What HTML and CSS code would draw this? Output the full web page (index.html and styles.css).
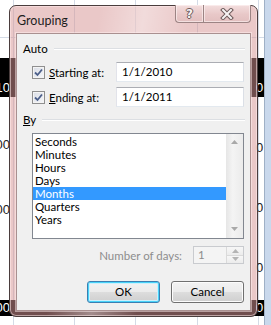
FILE: index.html
```html
<!DOCTYPE html>
<html>
<head>
<meta charset="utf-8">
<title>Grouping</title>
<link rel="stylesheet" href="styles.css">
</head>
<body>
<div class="sheet">
  <div class="cell left light" style="top:79px">10</div>
  <div class="cell left" style="top:136px">00</div>
  <div class="cell left" style="top:201px">00</div>
  <div class="cell left light" style="top:299px">00</div>
  <div class="cell right light" style="top:79px">0</div>
  <div class="cell right" style="top:139px">0</div>
  <div class="cell right" style="top:199px">0</div>
  <div class="cell right" style="top:259px">0</div>
  <div class="cell right light" style="top:299px">0</div>

  <div class="dialog">
    <div class="titlebar">
      <span class="title">Grouping</span>
      <div class="caption-btns">
        <div class="cap help">?</div>
        <div class="cap close">
          <svg width="16" height="12" viewBox="0 0 16 12">
            <path d="M4 2 L12 10 M12 2 L4 10" stroke="#6d5a5a" stroke-width="4" stroke-linecap="square" fill="none"/>
            <path d="M4 2 L12 10 M12 2 L4 10" stroke="#f6f2f2" stroke-width="2" stroke-linecap="square" fill="none"/>
          </svg>
        </div>
      </div>
    </div>
    <div class="client">
      <div class="group-head"><span>Auto</span><i class="rule"></i></div>
      <div class="auto-rows">
        <div class="row">
          <div class="chk">
            <span class="box"><svg width="9" height="9" viewBox="0 0 9 9"><path d="M1 4.5 L3.5 7 L8 1.5" stroke="#4c5f8a" stroke-width="1.8" fill="none"/></svg></span>
            <span class="lbl"><u>S</u>tarting at:</span>
          </div>
          <div class="textbox">1/1/2010</div>
        </div>
        <div class="row">
          <div class="chk">
            <span class="box"><svg width="9" height="9" viewBox="0 0 9 9"><path d="M1 4.5 L3.5 7 L8 1.5" stroke="#4c5f8a" stroke-width="1.8" fill="none"/></svg></span>
            <span class="lbl"><u>E</u>nding at:</span>
          </div>
          <div class="textbox">1/1/2011</div>
        </div>
      </div>
      <div class="group-head by"><span><u>B</u>y</span><i class="rule"></i></div>
      <div class="listbox">
        <ul class="items">
          <li>Seconds</li>
          <li>Minutes</li>
          <li>Hours</li>
          <li>Days</li>
          <li class="sel">Months</li>
          <li>Quarters</li>
          <li>Years</li>
        </ul>
        <div class="scrollbar">
          <svg width="7" height="4" viewBox="0 0 7 4"><path d="M0 4 L3.5 0 L7 4Z" fill="#a9a9a9"/></svg>
          <svg width="7" height="4" viewBox="0 0 7 4"><path d="M0 0 L3.5 4 L7 0Z" fill="#a9a9a9"/></svg>
        </div>
      </div>
      <div class="days-row">
        <span class="days-lbl">Number of days:</span>
        <div class="spin">
          <span class="spin-val">1</span>
          <div class="spin-btns">
            <span class="sb"><svg width="7" height="4" viewBox="0 0 7 4"><path d="M0 4 L3.5 0 L7 4Z" fill="#b4b4b4"/></svg></span>
            <span class="sb"><svg width="7" height="4" viewBox="0 0 7 4"><path d="M0 0 L3.5 4 L7 0Z" fill="#b4b4b4"/></svg></span>
          </div>
        </div>
      </div>
      <div class="buttons">
        <div class="btn default">OK</div>
        <div class="btn">Cancel</div>
      </div>
    </div>
  </div>
</div>
</body>
</html>
```
FILE: styles.css
```css
html, body {
  margin: 0;
  padding: 0;
  background: #fff;
}

.sheet {
  position: relative;
  width: 271px;
  height: 325px;
  overflow: hidden;
  font-family: Lato, "Open Sans", sans-serif;
  background:
    linear-gradient(#c9d8ec, #c9d8ec) 265px 0 / 6px 100% no-repeat,
    linear-gradient(#9fb0c6, #9fb0c6) 264px 0 / 1px 100% no-repeat,
    linear-gradient(#000, #000) 0 58px / 264px 39px no-repeat,
    linear-gradient(#000, #000) 0 300px / 264px 16px no-repeat,
    linear-gradient(#d4dbe6, #d4dbe6) 0 37px / 264px 1px no-repeat,
    linear-gradient(#d4dbe6, #d4dbe6) 13px 0 / 1px 100% no-repeat,
    linear-gradient(#d4dbe6, #d4dbe6) 74px 0 / 1px 100% no-repeat,
    linear-gradient(#d4dbe6, #d4dbe6) 135px 0 / 1px 100% no-repeat,
    linear-gradient(#d4dbe6, #d4dbe6) 197px 0 / 1px 100% no-repeat,
    linear-gradient(#d4dbe6, #d4dbe6) 258px 0 / 1px 100% no-repeat,
    #fff;
}

.cell {
  position: absolute;
  font-family: "Liberation Sans", sans-serif;
  font-size: 13px;
  line-height: 18px;
  color: #222;
}
.cell.left { right: 261px; }
.cell.right { left: 256px; }
.cell.light { color: #fff; }

.dialog {
  position: absolute;
  left: 9px;
  top: 5px;
  width: 249px;
  height: 312px;
  box-sizing: border-box;
  border: 1px solid #4a3d3d;
  border-radius: 7px;
  padding: 0 6px 5px 6px;
  display: flex;
  flex-direction: column;
  background:
    linear-gradient(100deg, rgba(255,255,255,0) 30%, rgba(255,255,255,0.35) 45%, rgba(255,255,255,0) 60%),
    rgba(214, 150, 150, 0.52);
  box-shadow: inset 0 0 0 1px rgba(255, 235, 235, 0.55);
}

.titlebar {
  height: 27px;
  display: flex;
  justify-content: space-between;
  align-items: flex-start;
  flex: none;
}

.title {
  font-size: 12.5px;
  color: #1e1e1e;
  line-height: 14px;
  margin-top: 8px;
  margin-left: 1px;
}

.caption-btns {
  display: flex;
  margin-top: -1px;
}

.cap {
  height: 18px;
  box-sizing: border-box;
  border: 1px solid #9c8484;
  border-top: none;
  display: flex;
  align-items: center;
  justify-content: center;
  background: linear-gradient(#f3dede, #e8c8c8 55%, #e2bfbf);
  box-shadow: inset 0 0 0 1px rgba(255, 245, 245, 0.6);
}
.cap.help {
  width: 28px;
  border-radius: 0 0 0 4px;
  border-right: none;
  font-family: "DejaVu Sans", sans-serif;
  font-weight: bold;
  font-size: 12px;
  color: #f7f3f3;
  text-shadow: 1px 0 #6d5a5a, -1px 0 #6d5a5a, 0 1px #6d5a5a, 0 -1px #6d5a5a;
}
.cap.close {
  width: 48px;
  border-radius: 0 0 4px 0;
}

.client {
  flex: 1;
  border: 1px solid #a99090;
  background: #f0f0f0;
  padding: 8px 5px 0 6px;
  box-shadow: 0 0 0 1px rgba(255, 240, 240, 0.5);
  font-size: 11.5px;
  color: #000;
}

.group-head {
  display: flex;
  align-items: center;
  height: 14px;
  line-height: 14px;
  gap: 6px;
}
.group-head .rule {
  flex: 1;
  height: 1px;
  background: #dcdfe3;
  border-bottom: 1px solid #fff;
}
.group-head.by {
  margin-top: 6px;
}

.auto-rows {
  margin-top: 6px;
  display: flex;
  flex-direction: column;
  gap: 5px;
  padding-left: 9px;
  padding-right: 1px;
}

.row {
  display: flex;
  align-items: center;
  justify-content: space-between;
  height: 20px;
}

.chk {
  display: flex;
  align-items: center;
  gap: 4px;
}

.box {
  width: 13px;
  height: 13px;
  box-sizing: border-box;
  border: 1px solid #8f8f8f;
  background: linear-gradient(135deg, #d9dde6, #f6f7f9);
  box-shadow: inset 0 0 0 1px #f4f4f4;
  display: flex;
  align-items: center;
  justify-content: center;
}

.textbox {
  width: 128px;
  height: 20px;
  box-sizing: border-box;
  border: 1px solid #abadb3;
  border-color: #abadb3 #dbdfe6 #e3e9ef #e2e3ea;
  background: #fff;
  padding-left: 5px;
  line-height: 18px;
}

.listbox {
  margin: 6px 1px 0 9px;
  height: 106px;
  box-sizing: border-box;
  border: 1px solid #828790;
  background: #fff;
  display: flex;
}

.items {
  list-style: none;
  margin: 0;
  padding: 1px 0 0 0;
  flex: 1;
}
.items li {
  height: 13px;
  line-height: 13px;
  padding-left: 2px;
}
.items li.sel {
  background: #3399ff;
  color: #fff;
}

.scrollbar {
  width: 17px;
  background: linear-gradient(to right, #e6e6e6, #f4f4f4 40%, #ebebeb);
  display: flex;
  flex-direction: column;
  justify-content: space-between;
  align-items: center;
  padding: 6px 0 7px;
  box-sizing: border-box;
}

.days-row {
  margin-top: 7px;
  display: flex;
  justify-content: flex-end;
  align-items: center;
  gap: 11px;
  padding-right: 1px;
}
.days-lbl {
  color: #8d8d8d;
}

.spin {
  width: 51px;
  height: 18px;
  box-sizing: border-box;
  border: 1px solid #c9cbcf;
  background: #f4f4f4;
  display: flex;
}
.spin-val {
  flex: 1;
  color: #8d8d8d;
  padding-left: 4px;
  line-height: 16px;
}
.spin-btns {
  width: 16px;
  display: flex;
  flex-direction: column;
  border-left: 1px solid #dadada;
}
.sb {
  flex: 1;
  display: flex;
  align-items: center;
  justify-content: center;
  background: linear-gradient(#f7f7f7, #ececec);
}
.sb + .sb {
  border-top: 1px solid #dadada;
}

.buttons {
  margin-top: 17px;
  display: flex;
  justify-content: flex-end;
  gap: 11px;
  padding-right: 1px;
}
.btn {
  width: 73px;
  height: 22px;
  box-sizing: border-box;
  border: 1px solid #707070;
  border-radius: 3px;
  text-align: center;
  line-height: 20px;
  background: linear-gradient(#f2f2f2, #ebebeb 50%, #dddddd 50%, #cfcfcf);
  box-shadow: inset 0 0 0 1px #fcfcfc;
}
.btn.default {
  border-color: #3c7fb1;
  box-shadow: inset 0 0 0 1px #48d3f9, inset 0 0 0 2px #ccf0fc;
}
```
